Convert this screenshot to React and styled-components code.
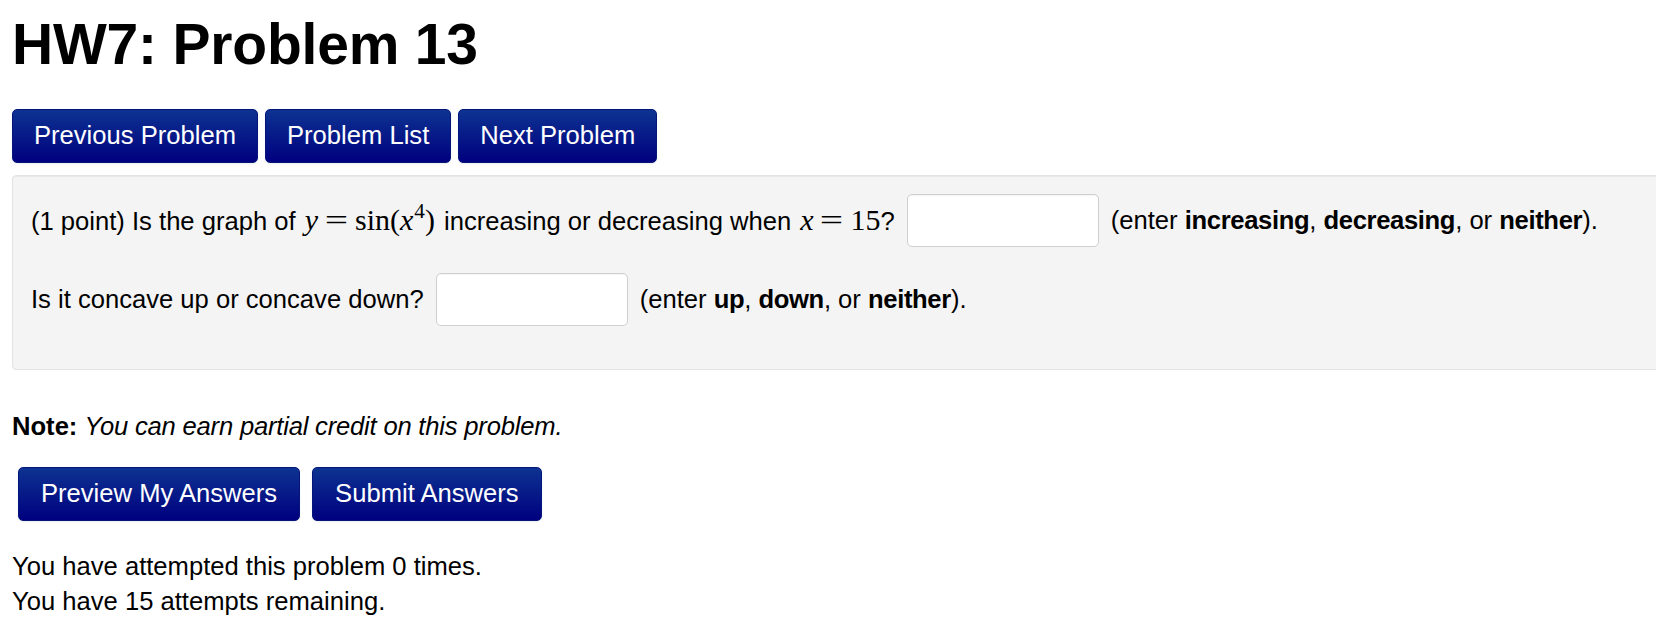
import React from 'react';
import styled, { createGlobalStyle } from 'styled-components';

const GlobalStyle = createGlobalStyle`
  html, body {
    margin: 0;
    padding: 0;
    background: #ffffff;
    overflow-x: hidden;
  }
  body {
    font-family: 'Liberation Sans', Arial, Helvetica, sans-serif;
    font-size: 25.6px;
    line-height: 35px;
    color: #000;
  }
`;

const Page = styled.div`
  padding: 12px 0 0 12px;
`;

const Title = styled.h1`
  margin: 0;
  font-size: 57px;
  line-height: 64px;
  font-weight: bold;
  letter-spacing: -0.2px;
`;

const ButtonRow = styled.div`
  display: flex;
  gap: ${({ gap }) => gap}px;
  margin-top: ${({ top }) => top}px;
  margin-left: ${({ left }) => left || 0}px;
`;

const Button = styled.button`
  height: 54px;
  padding: 0 ${({ pad }) => pad || 22}px;
  border: 1px solid #04167a;
  border-radius: 5px;
  background: linear-gradient(to bottom, #0d3391 0%, #00007f 100%);
  color: #fff;
  font-family: 'Liberation Sans', Arial, Helvetica, sans-serif;
  font-size: 25.6px;
  line-height: 1;
  cursor: pointer;
  box-shadow: 0 1px 2px rgba(0, 0, 0, 0.08);
`;

const Well = styled.div`
  margin-top: 12px;
  margin-right: -20px;
  padding: 18px 18px 43px 18px;
  background: #f4f4f4;
  border: 1px solid #e3e3e3;
  border-radius: 4px;
  box-shadow: inset 0 1px 1px rgba(0, 0, 0, 0.05);
  display: flex;
  flex-direction: column;
  gap: 26px;

  b {
    letter-spacing: -0.35px;
  }
`;

const Line = styled.div`
  display: flex;
  align-items: center;
  gap: 12px;
  white-space: pre;
`;

const AnswerBox = styled.input`
  width: 192px;
  height: 53px;
  box-sizing: border-box;
  border: 1px solid #cfcfcf;
  border-radius: 5px;
  background: #fff;
  box-shadow: inset 0 1px 1px rgba(0, 0, 0, 0.04);
  font-size: 22px;
  padding: 0 10px;
  outline: none;
`;

const Math = styled.span`
  font-family: 'Liberation Serif', 'Times New Roman', serif;
  font-size: 30px;
  margin: 0 ${({ tight }) => (tight ? '0 0 2px' : '2px')};
`;

const Var = styled.i`
  font-style: italic;
`;

// TeX "=" is wider than the Times one, so stretch it
const Rel = styled.span`
  display: inline-block;
  width: 0.76em;
  margin: 0 0.25em 0 0.22em;
  text-align: center;
  transform: scaleX(1.38);
`;

const Sup = styled.sup`
  font-size: 0.707em;
  line-height: 0;
  vertical-align: 0.55em;
  margin-left: 1px;
`;

const Note = styled.p`
  margin: 39px 0 0 0;

  i {
    letter-spacing: -0.2px;
  }
`;

const Attempts = styled.div`
  margin-top: 28px;
`;

const App = () => {
  return (
    <>
      <GlobalStyle />
      <Page>
        <Title>HW7: Problem 13</Title>

        <ButtonRow gap={7} top={33}>
          <Button pad={21}>Previous Problem</Button>
          <Button pad={21}>Problem List</Button>
          <Button pad={21}>Next Problem</Button>
        </ButtonRow>

        <Well>
          <Line>
            <span>
              (1 point) Is the graph of{' '}
              <Math>
                <Var>y</Var>
                <Rel>=</Rel>sin(<Var>x</Var>
                <Sup>4</Sup>)
              </Math>{' '}
              increasing or decreasing when{' '}
              <Math tight>
                <Var>x</Var>
                <Rel>=</Rel>15
              </Math>
              ?
            </span>
            <AnswerBox type="text" />
            <span>
              (enter <b>increasing</b>, <b>decreasing</b>, or <b>neither</b>).
            </span>
          </Line>
          <Line>
            <span>Is it concave up or concave down?</span>
            <AnswerBox type="text" />
            <span>
              (enter <b>up</b>, <b>down</b>, or <b>neither</b>).
            </span>
          </Line>
        </Well>

        <Note>
          <b>Note:</b> <i>You can earn partial credit on this problem.</i>
        </Note>

        <ButtonRow gap={12} top={23} left={6}>
          <Button>Preview My Answers</Button>
          <Button>Submit Answers</Button>
        </ButtonRow>

        <Attempts>
          You have attempted this problem 0 times.
          <br />
          You have 15 attempts remaining.
        </Attempts>
      </Page>
    </>
  );
};

export default App;
